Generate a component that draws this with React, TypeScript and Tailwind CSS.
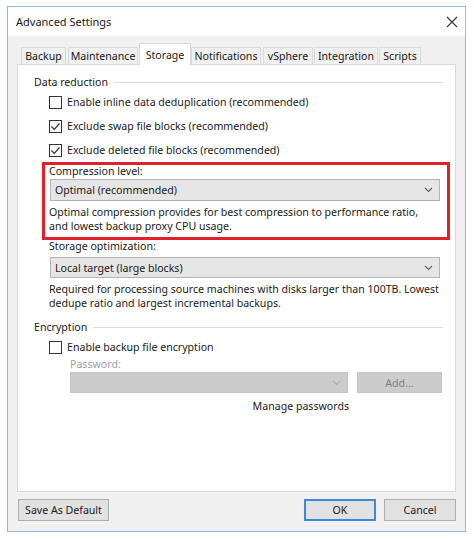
import { ReactNode } from 'react';

const tabs = [
  { label: 'Backup', w: 'w-[45px]', ml: 'ml-[4px]' },
  { label: 'Maintenance', w: 'w-[70px]', ml: 'ml-[2px]' },
  { label: 'Storage', w: 'w-[52px]', ml: 'ml-[1px]', active: true },
  { label: 'Notifications', w: 'w-[70px]', ml: 'ml-[0px]' },
  { label: 'vSphere', w: 'w-[50px]', ml: 'ml-[2px]' },
  { label: 'Integration', w: 'w-[64px]', ml: 'ml-[1px]' },
  { label: 'Scripts', w: 'w-[42px]', ml: 'ml-[1px]' },
];

function Chevron({ color = '#606060' }: { color?: string }) {
  return (
    <svg width="9" height="6" viewBox="0 0 9 6" fill="none">
      <path d="M1 1l3.5 3.5L8 1" stroke={color} strokeWidth="1.1" />
    </svg>
  );
}

function Checkbox({ checked, label }: { checked?: boolean; label: string }) {
  return (
    <div className="flex items-center h-[16px]">
      <div className="w-[13px] h-[13px] border border-[#333333] bg-white flex items-center justify-center">
        {checked && (
          <svg width="11" height="11" viewBox="0 0 11 11" fill="none">
            <path d="M1.5 5.5l2.8 2.8L9.5 2.5" stroke="#333333" strokeWidth="1.2" />
          </svg>
        )}
      </div>
      <span className="ml-[5px] whitespace-nowrap">{label}</span>
    </div>
  );
}

function GroupTitle({ children }: { children: ReactNode }) {
  return (
    <div className="flex items-center h-[14px] pl-[16px] pr-[12px]">
      <span>{children}</span>
      <div className="flex-1 h-px bg-[#dcdcdc] ml-[6px]" />
    </div>
  );
}

function Select({ value, h = 'h-[22px]' }: { value: string; h?: string }) {
  return (
    <div className={`${h} w-[390px] bg-[#e5e5e5] border border-[#b4b4b4] flex items-center justify-between pl-[4px] pr-[6px]`}>
      <span>{value}</span>
      <Chevron />
    </div>
  );
}

export default function App() {
  return (
    <div
      className="min-h-[540px] bg-white pt-[6px] pl-[7px] text-[10.6px] leading-[14px] text-[#1a1a1a] whitespace-nowrap"
      style={{ fontFamily: '"Noto Sans", "Liberation Sans", sans-serif' }}
    >
      <div className="w-[459px] h-[526px] border border-[#8cbbe8] bg-[#f0f0f0] flex flex-col">
        <div className="h-[29px] bg-white flex items-center justify-between pl-[8px] pr-[7px]">
          <span className="text-[11px]">Advanced Settings</span>
          <svg width="12" height="12" viewBox="0 0 12 12" fill="none">
            <path d="M1 1l10 10M11 1L1 11" stroke="#333333" strokeWidth="1.1" />
          </svg>
        </div>

        <div className="flex-1 flex flex-col px-[9px] pt-[7px]">
          <div className="flex items-end h-[21px]">
            {tabs.map((t) => (
              <div
                key={t.label}
                className={`${t.w} ${t.ml} flex items-center justify-center border border-b-0 ${
                  t.active
                    ? 'h-[22px] -mb-px relative z-10 bg-white border-[#d9d9d9]'
                    : 'h-[17px] bg-[#f0f0f0] border-[#dadada]'
                }`}
              >
                {t.label}
              </div>
            ))}
          </div>

          <div className="h-[428px] bg-white border border-[#d9d9d9] flex flex-col pt-[10px]">
            <GroupTitle>Data reduction</GroupTitle>
            <div className="flex flex-col gap-[8px] pl-[31px] mt-[5px]">
              <Checkbox label="Enable inline data deduplication (recommended)" />
              <Checkbox checked label="Exclude swap file blocks (recommended)" />
              <Checkbox checked label="Exclude deleted file blocks (recommended)" />
            </div>

            <div className="ml-[24px] w-[408px] h-[78px] mt-[4px] border-[3px] border-[#e0202a] pl-[4px] flex flex-col">
              <div className="mt-[-1px]">Compression level:</div>
              <div className="ml-[1px] mt-[1px]">
                <Select value="Optimal (recommended)" />
              </div>
              <div className="mt-[4px]">
                Optimal compression provides for best compression to performance ratio,
                <br />
                and lowest backup proxy CPU usage.
              </div>
            </div>

            <div className="pl-[31px] mt-[-1px]">Storage optimization:</div>
            <div className="pl-[32px] mt-[4px]">
              <Select value="Local target (large blocks)" h="h-[21px]" />
            </div>
            <div className="pl-[31px] mt-[4px]">
              Required for processing source machines with disks larger than 100TB. Lowest
              <br />
              dedupe ratio and largest incremental backups.
            </div>

            <div className="mt-[10px]">
              <GroupTitle>Encryption</GroupTitle>
            </div>
            <div className="pl-[31px] mt-[5px]">
              <Checkbox label="Enable backup file encryption" />
            </div>
            <div className="pl-[52px] mt-[2px] text-[#a0a0a0]">Password:</div>
            <div className="pl-[52px] mt-[1px] flex items-center">
              <div className="w-[278px] h-[21px] bg-[#cccccc] border border-[#c4c4c4] flex items-center justify-end pr-[6px]">
                <Chevron color="#b0b0b0" />
              </div>
              <div className="ml-[9px] w-[85px] h-[21px] bg-[#cccccc] border border-[#c4c4c4] flex items-center justify-center text-[#808080]">
                Add...
              </div>
            </div>
            <div className="pl-[52px] mt-[6px] w-[331px] text-right">Manage passwords</div>
          </div>

          <div className="flex items-center mt-[7px] mb-[10px]">
            <button className="w-[91px] h-[22px] bg-[#e1e1e1] border border-[#adadad] ml-[1px]">
              Save As Default
            </button>
            <div className="flex-1" />
            <button className="w-[72px] h-[22px] bg-[#e1e1e1] border-2 border-[#3b8ad9]">OK</button>
            <button className="w-[72px] h-[22px] bg-[#e1e1e1] border border-[#adadad] ml-[8px]">
              Cancel
            </button>
          </div>
        </div>
      </div>
    </div>
  );
}
